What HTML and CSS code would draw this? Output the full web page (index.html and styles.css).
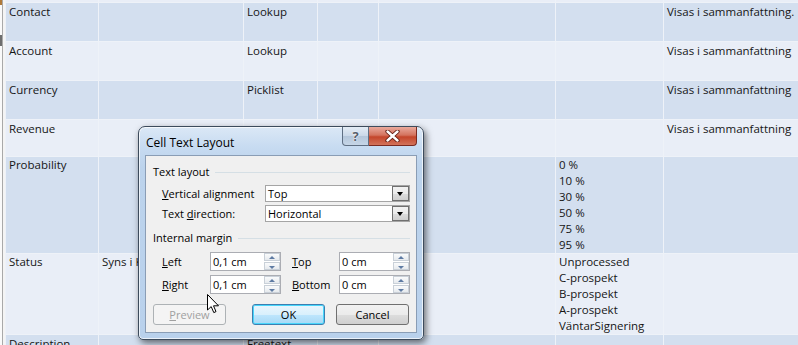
FILE: index.html
```html
<!DOCTYPE html>
<html lang="sv">
  <head>
    <meta charset="UTF-8" />
    <title>Cell Text Layout</title>
    <link rel="stylesheet" href="styles.css">
  </head>
  <body>
    <div class="page">
      <div class="gutter"></div>
      <table class="sheet">
        <colgroup>
          <col style="width: 93px" />
          <col style="width: 145px" />
          <col style="width: 74px" />
          <col style="width: 61px" />
          <col style="width: 177px" />
          <col style="width: 108px" />
          <col style="width: 140px" />
        </colgroup>
        <tr class="light strip"><td></td><td></td><td></td><td></td><td></td><td></td><td></td></tr>
        <tr class="dark r-contact">
          <td>Contact</td><td></td><td>Lookup</td><td></td><td></td><td></td><td>Visas i sammanfattning.</td>
        </tr>
        <tr class="light r-account">
          <td>Account</td><td></td><td>Lookup</td><td></td><td></td><td></td><td>Visas i sammanfattning</td>
        </tr>
        <tr class="dark r-currency">
          <td>Currency</td><td></td><td>Picklist</td><td></td><td></td><td></td><td>Visas i sammanfattning</td>
        </tr>
        <tr class="light r-revenue">
          <td>Revenue</td><td></td><td></td><td></td><td></td><td></td><td>Visas i sammanfattning</td>
        </tr>
        <tr class="dark r-probability">
          <td>Probability</td><td></td><td></td><td></td><td></td>
          <td>0 %<br />10 %<br />30 %<br />50 %<br />75 %<br />95 %</td>
          <td></td>
        </tr>
        <tr class="light r-status">
          <td>Status</td><td>Syns i K</td><td></td><td></td><td></td>
          <td>Unprocessed<br />C-prospekt<br />B-prospekt<br />A-prospekt<br />VäntarSignering</td>
          <td></td>
        </tr>
        <tr class="dark r-desc">
          <td>Description</td><td></td><td>Freetext</td><td></td><td></td><td></td><td></td>
        </tr>
      </table>
    </div>

    <div class="dialog">
      <div class="titlebar">
        <span class="title">Cell Text Layout</span>
        <div class="caption-buttons">
          <span class="cap-btn help">?</span>
          <span class="cap-btn close">
            <svg width="15" height="12" viewBox="0 0 15 12">
              <path d="M2.5 1.5 L12.5 10.5 M12.5 1.5 L2.5 10.5" stroke="#5e1a10" stroke-width="4.2" stroke-linecap="round" />
              <path d="M2.5 1.5 L12.5 10.5 M12.5 1.5 L2.5 10.5" stroke="#fff" stroke-width="2.4" stroke-linecap="round" />
            </svg>
          </span>
        </div>
      </div>

      <div class="client">
        <div class="group-title"><span>Text layout</span></div>
        <div class="field-row first">
          <span class="label"><u>V</u>ertical alignment</span>
          <div class="select"><span>Top</span><i class="drop"></i></div>
        </div>
        <div class="field-row">
          <span class="label">Text <u>d</u>irection:</span>
          <div class="select"><span>Horizontal</span><i class="drop"></i></div>
        </div>

        <div class="group-title second"><span>Internal margin</span></div>
        <div class="margin-row first">
          <span class="label short"><u>L</u>eft</span>
          <div class="spin"><span>0,1 cm</span><i class="arrows"><b class="up"></b><b class="down"></b></i></div>
          <span class="label short2"><u>T</u>op</span>
          <div class="spin"><span>0 cm</span><i class="arrows"><b class="up"></b><b class="down"></b></i></div>
        </div>
        <div class="margin-row">
          <span class="label short"><u>R</u>ight</span>
          <div class="spin"><span>0,1 cm</span><i class="arrows"><b class="up"></b><b class="down"></b></i></div>
          <span class="label short2"><u>B</u>ottom</span>
          <div class="spin"><span>0 cm</span><i class="arrows"><b class="up"></b><b class="down"></b></i></div>
        </div>

        <div class="button-row">
          <span class="btn disabled"><u>P</u>review</span>
          <span class="btn default">OK</span>
          <span class="btn">Cancel</span>
        </div>
      </div>
    </div>

    <svg class="cursor" width="13" height="20" viewBox="0 0 13 20">
      <path d="M0.5 0.5 L0.5 16 L4.2 12.6 L6.8 18.6 L9 17.6 L6.5 11.8 L11.5 11.8 Z" fill="#fff" stroke="#000" stroke-width="1" stroke-linejoin="miter" />
    </svg>
  </body>
</html>
```

FILE: styles.css
```css
body {
  margin: 0;
  background: #fff;
  font-family: "Open Sans", Arial, sans-serif;
  overflow: hidden;
}
.page {
  display: flex;
  width: 798px;
  height: 345px;
  overflow: hidden;
}
.gutter {
  flex: 0 0 5px;
  background:
    linear-gradient(#b07a3a, #b07a3a) 0 0 / 2px 5px no-repeat,
    linear-gradient(#6e6e6e, #6e6e6e) 0 35px / 2px 11px no-repeat,
    linear-gradient(to right, #fafafa 2px, #a9a9a9 2px, #a9a9a9 3px, #f4f4f4 3px);
}
.sheet {
  border-collapse: collapse;
  table-layout: fixed;
  width: 798px;
  flex: 0 0 798px;
  font-size: 11.5px;
  color: #161616;
}
.sheet td {
  border: 1px solid #eef2f8;
  padding: 1px 3px 0;
  vertical-align: top;
  line-height: 16px;
  white-space: nowrap;
  overflow: hidden;
}
.dark td {
  background: #d3dfef;
}
.light td {
  background: #e9eef7;
}
.strip td {
  height: 2px;
  padding: 0;
  line-height: 2px;
  border-top: none;
}
.r-contact td { height: 37px; }
.r-account td { height: 37px; }
.r-currency td { height: 37px; }
.r-revenue td { height: 35px; }
.r-probability td { height: 95px; padding-top: 0; }
.r-status td { height: 79px; padding-top: 0; }
.r-desc td { height: 20px; }

/* dialog */
.dialog {
  position: absolute;
  left: 138px;
  top: 126px;
  width: 286px;
  height: 214px;
  box-sizing: border-box;
  border: 1px solid #3d4b5c;
  border-radius: 7px 7px 5px 5px;
  background: linear-gradient(to bottom, #dbe8f6 0px, #c7dbf1 20px, #bcd3ec 40px, #b9d1ec 100%);
  box-shadow: 2px 3px 7px rgba(0, 0, 0, 0.55), inset 0 0 0 1px rgba(255, 255, 255, 0.7);
  display: flex;
  flex-direction: column;
  font-family: "Open Sans", Arial, sans-serif;
  font-size: 11px;
  color: #000;
}
.titlebar {
  height: 28px;
  display: flex;
  justify-content: space-between;
  align-items: flex-start;
  padding-left: 7px;
}
.title {
  margin-top: 8px;
  font-size: 12px;
  line-height: 16px;
}
.caption-buttons {
  display: flex;
  margin-right: 6px;
}
.cap-btn {
  height: 19px;
  box-sizing: border-box;
  border: 1px solid #5f6f83;
  border-top: none;
  display: flex;
  align-items: center;
  justify-content: center;
}
.help {
  width: 27px;
  border-radius: 0 0 0 4px;
  background: linear-gradient(to bottom, #e4ecf5 0%, #cad8e8 50%, #b4c6da 51%, #c6d6e7 100%);
  color: #56606c;
  font-size: 13px;
  font-weight: bold;
  text-shadow: 0 0 2px #fff, 0 0 1px #fff;
  line-height: 16px;
}
.close {
  width: 48px;
  border-left: none;
  border-color: #7a2a20;
  border-radius: 0 0 4px 0;
  background: linear-gradient(to bottom, #e9a99c 0%, #d4735e 45%, #c4452a 55%, #d2735a 100%);
}
.client {
  flex: 1;
  margin: 0 6px 6px 6px;
  border: 1px solid #8a9db5;
  background: #f0f0f0;
  display: flex;
  flex-direction: column;
  padding: 0 6px 0 7px;
}
.group-title {
  display: flex;
  align-items: center;
  margin-top: 9px;
  height: 14px;
  line-height: 14px;
}
.group-title::after {
  content: "";
  flex: 1;
  height: 1px;
  background: #d5dfe5;
  margin-left: 6px;
}
.field-row {
  display: flex;
  align-items: center;
  margin-top: 3px;
  padding-left: 9px;
}
.field-row.first {
  margin-top: 6px;
}
.field-row .label {
  width: 103px;
}
.select {
  width: 145px;
  height: 17px;
  box-sizing: border-box;
  border: 1px solid #a5a5a5;
  background: #fff;
  display: flex;
  align-items: center;
  justify-content: space-between;
  padding-left: 2px;
}
.drop {
  width: 17px;
  height: 15px;
  box-sizing: border-box;
  border: 1px solid #707070;
  background: linear-gradient(to bottom, #f2f2f2 0%, #ebebeb 50%, #dddddd 51%, #cfcfcf 100%);
  position: relative;
}
.drop::after {
  content: "";
  position: absolute;
  left: 4px;
  top: 5px;
  border-left: 3.5px solid transparent;
  border-right: 3.5px solid transparent;
  border-top: 4px solid #000;
}
.margin-row {
  display: flex;
  align-items: center;
  margin-top: 4px;
  padding-left: 9px;
}
.margin-row.first {
  margin-top: 7px;
}
.label.short {
  width: 48px;
}
.label.short2 {
  width: 47px;
  margin-left: 11px;
}
.spin {
  width: 71px;
  height: 19px;
  box-sizing: border-box;
  border: 1px solid #abadb3;
  background: #fff;
  display: flex;
  align-items: center;
  justify-content: space-between;
  padding-left: 2px;
}
.arrows {
  width: 16px;
  height: 17px;
  display: flex;
  flex-direction: column;
  gap: 1px;
}
.arrows b {
  flex: 1;
  box-sizing: border-box;
  border: 1px solid #c9d0d8;
  background: linear-gradient(to bottom, #fafbfc, #e6eaee);
  position: relative;
}
.arrows b::after {
  content: "";
  position: absolute;
  left: 4px;
  border-left: 3px solid transparent;
  border-right: 3px solid transparent;
}
.arrows .up::after {
  top: 2px;
  border-bottom: 3px solid #5e7ba3;
}
.arrows .down::after {
  top: 3px;
  border-top: 3px solid #5e7ba3;
}
.button-row {
  display: flex;
  margin-top: 10px;
}
.btn {
  width: 73px;
  height: 21px;
  box-sizing: border-box;
  border: 1px solid #707070;
  border-radius: 3px;
  background: linear-gradient(to bottom, #f2f2f2 0%, #ebebeb 50%, #dddddd 51%, #cfcfcf 100%);
  display: flex;
  align-items: center;
  justify-content: center;
  margin-left: 11px;
}
.btn.disabled {
  margin-left: 0;
  border-color: #adb2b5;
  background: #f4f4f4;
  color: #a0a0a0;
  margin-right: 15px;
}
.btn.default {
  border-color: #3c7fb1;
  box-shadow: inset 0 0 0 1px #48d6fb;
  background: linear-gradient(to bottom, #eaf6fd 0%, #d9f0fc 50%, #bee6fd 51%, #a7d9f5 100%);
}
.cursor {
  position: absolute;
  left: 207px;
  top: 294px;
}
```
